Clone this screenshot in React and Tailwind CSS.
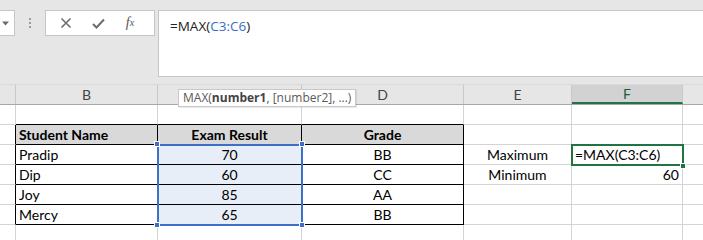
import React from "react";

const COLS = [16, 142, 144, 162, 108, 111, 40];

function Cell({ w, children, r = "#d4d4d4", b = "#d4d4d4", bg, align = "left", bold, className = "" }) {
  const justify = align === "center" ? "justify-center" : align === "right" ? "justify-end" : "justify-start";
  return (
    <div
      className={`h-[20px] shrink-0 flex items-center px-[3px] border-r border-b overflow-hidden whitespace-nowrap ${justify} ${bold ? "font-bold" : ""} ${className}`}
      style={{ width: w, borderRightColor: r, borderBottomColor: b, backgroundColor: bg }}
    >
      {children}
    </div>
  );
}

const data = [
  ["Pradip", "70", "BB"],
  ["Dip", "60", "CC"],
  ["Joy", "85", "AA"],
  ["Mercy", "65", "BB"],
];

export default function App() {
  const K = "#000000";
  return (
    <div className="relative w-[703px] h-[240px] overflow-hidden bg-white text-[14px] text-black" style={{ fontFamily: "Lato, 'Open Sans', sans-serif" }}>
      {/* Formula bar area */}
      <div className="h-[85px] bg-[#e6e6e6] border-b border-[#dadada] flex items-start pt-[10px]">
        <div className="w-[15px] h-[26px] bg-white border border-l-0 border-[#c6c6c6] flex items-center pl-[1px]">
          <svg width="9" height="5" viewBox="0 0 9 5"><path d="M1 0.5 L8 0.5 L4.5 4.5 Z" fill="#6b6b6b" /></svg>
        </div>
        <div className="w-[30px] h-[26px] flex flex-col items-center justify-center gap-[2px]">
          <span className="w-[2px] h-[2px] bg-[#9a9a9a]" />
          <span className="w-[2px] h-[2px] bg-[#9a9a9a]" />
          <span className="w-[2px] h-[2px] bg-[#9a9a9a]" />
        </div>
        <div className="w-[110px] h-[26px] bg-white border border-[#c6c6c6] flex items-center">
          <div className="w-[38px] flex justify-center pl-[2px]">
            <svg width="12" height="12" viewBox="0 0 12 12"><path d="M1.5 1.5 L10.5 10.5 M10.5 1.5 L1.5 10.5" stroke="#6d6d6d" strokeWidth="1.6" /></svg>
          </div>
          <div className="w-[28px] flex justify-center">
            <svg width="13" height="11" viewBox="0 0 13 11"><path d="M1 6 L4.5 9.5 L12 1.5" stroke="#6d6d6d" strokeWidth="2" fill="none" /></svg>
          </div>
          <div className="flex-1 flex justify-center pr-[6px] text-[#555] italic text-[14px] leading-none" style={{ fontFamily: "'Liberation Serif', serif" }}>
            f<span className="text-[10px] relative top-[2px] italic">x</span>
          </div>
        </div>
        <div className="ml-[3px] flex-1 h-[67px] bg-white border border-r-0 border-[#c6c6c6] pl-[11px] pt-[5px] text-[13.5px] text-[#222]" style={{ fontFamily: "'Open Sans', sans-serif" }}>
          =MAX(<span className="text-[#3a6fc4]">C3:C6</span>)
        </div>
      </div>

      {/* Column headers */}
      <div className="flex h-[20px] bg-[#e6e6e6] text-[#444] border-b border-[#a8a8a8]">
        {["", "B", "", "D", "E", "F", ""].map((l, i) => (
          <div
            key={i}
            className={`shrink-0 h-[19px] flex items-center justify-center border-r border-[#c9c9c9] ${l === "F" ? "bg-[#d2d2d2] text-[#1f5c38] border-b-2 border-b-[#217346]" : ""}`}
            style={{ width: COLS[i] }}
          >
            {l}
          </div>
        ))}
      </div>

      {/* Row 1 */}
      <div className="flex">
        <Cell w={COLS[0]} />
        <Cell w={COLS[1]} b={K} />
        <Cell w={COLS[2]} b={K} />
        <Cell w={COLS[3]} b={K} />
        <Cell w={COLS[4]} />
        <Cell w={COLS[5]} />
        <Cell w={COLS[6]} />
      </div>

      {/* Row 2 header */}
      <div className="flex">
        <Cell w={COLS[0]} r={K} />
        <Cell w={COLS[1]} r={K} b={K} bg="#d9d9d9" bold>Student Name</Cell>
        <Cell w={COLS[2]} r={K} b={K} bg="#d9d9d9" bold align="center">Exam Result</Cell>
        <Cell w={COLS[3]} r={K} b={K} bg="#d9d9d9" bold align="center">Grade</Cell>
        <Cell w={COLS[4]} />
        <Cell w={COLS[5]} />
        <Cell w={COLS[6]} />
      </div>

      {data.map((row, i) => (
        <div className="flex" key={i}>
          <Cell w={COLS[0]} r={K} />
          <Cell w={COLS[1]} r={K} b={K}>{row[0]}</Cell>
          <Cell w={COLS[2]} r={K} b={K} bg="#e8eef8" align="center">{row[1]}</Cell>
          <Cell w={COLS[3]} r={K} b={K} align="center">{row[2]}</Cell>
          <Cell w={COLS[4]} align="center">{i === 0 ? "Maximum" : i === 1 ? "Minimum" : ""}</Cell>
          <Cell w={COLS[5]} align={i === 1 ? "right" : "left"}>{i === 0 ? "=MAX(C3:C6)" : i === 1 ? "60" : ""}</Cell>
          <Cell w={COLS[6]} />
        </div>
      ))}

      <div className="flex">
        {COLS.map((w, i) => <Cell key={i} w={w} />)}
      </div>

      {/* Selection range C3:C6 */}
      <div className="absolute left-[157px] top-[144px] w-[146px] h-[82px] border-2 border-[#3d6fc6] pointer-events-none" />
      {[[157, 144], [302, 144], [157, 225], [302, 225]].map(([x, y], i) => (
        <div key={i} className="absolute w-[6px] h-[6px] bg-[#3d6fc6] border border-white" style={{ left: x - 3, top: y - 3 }} />
      ))}

      {/* Active cell F2 */}
      <div className="absolute left-[571px] top-[144px] w-[113px] h-[22px] border-2 border-[#217346] pointer-events-none" />
      <div className="absolute left-[680px] top-[163px] w-[6px] h-[6px] bg-[#217346] border border-white" />

      {/* Tooltip */}
      <div className="absolute left-[178px] top-[89px] h-[18px] px-[4px] bg-white border border-[#c8c8c8] flex items-center text-[12px] text-[#5a5a5a] whitespace-nowrap shadow-[1px_1px_1px_rgba(0,0,0,0.08)]" style={{ fontFamily: "'Open Sans', sans-serif" }}>
        MAX(<span className="font-bold text-[#444]">number1</span>, [number2], ...)
      </div>
    </div>
  );
}
